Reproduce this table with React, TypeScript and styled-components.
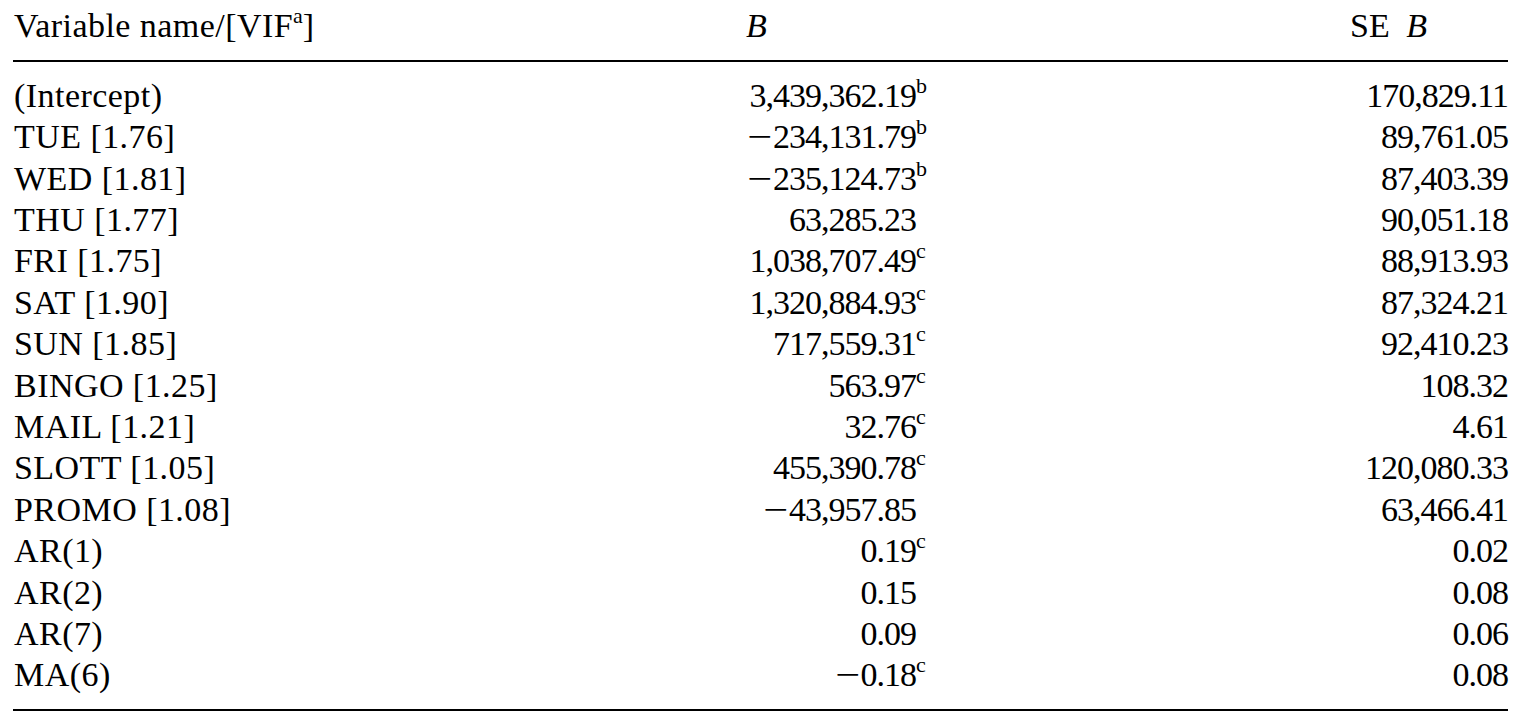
import React from 'react';
import styled, { createGlobalStyle } from 'styled-components';

const GlobalStyle = createGlobalStyle`
   html, body {
      margin: 0;
      background: #fff;
   }
   body {
      font-family: 'Liberation Serif', 'Times New Roman', serif;
      color: #000;
   }
`;

type Entry = { name: string; b: string; neg?: boolean; bNote?: string; se: string };

const ROWS: Entry[] = [
   { name: '(Intercept)', b: '3,439,362.19', bNote: 'b', se: '170,829.11' },
   { name: 'TUE [1.76]', b: '234,131.79', neg: true, bNote: 'b', se: '89,761.05' },
   { name: 'WED [1.81]', b: '235,124.73', neg: true, bNote: 'b', se: '87,403.39' },
   { name: 'THU [1.77]', b: '63,285.23', se: '90,051.18' },
   { name: 'FRI [1.75]', b: '1,038,707.49', bNote: 'c', se: '88,913.93' },
   { name: 'SAT [1.90]', b: '1,320,884.93', bNote: 'c', se: '87,324.21' },
   { name: 'SUN [1.85]', b: '717,559.31', bNote: 'c', se: '92,410.23' },
   { name: 'BINGO [1.25]', b: '563.97', bNote: 'c', se: '108.32' },
   { name: 'MAIL [1.21]', b: '32.76', bNote: 'c', se: '4.61' },
   { name: 'SLOTT [1.05]', b: '455,390.78', bNote: 'c', se: '120,080.33' },
   { name: 'PROMO [1.08]', b: '43,957.85', neg: true, se: '63,466.41' },
   { name: 'AR(1)', b: '0.19', bNote: 'c', se: '0.02' },
   { name: 'AR(2)', b: '0.15', se: '0.08' },
   { name: 'AR(7)', b: '0.09', se: '0.06' },
   { name: 'MA(6)', b: '0.18', neg: true, bNote: 'c', se: '0.08' },
];

const Table = styled.div`
   margin-left: 13px;
   width: 1495px;
   font-size: 34px;
   line-height: 41.4px;
`;

const Row = styled.div`
   display: grid;
   grid-template-columns: 733px 186px 1fr 158px;
   white-space: nowrap;
`;

const HeadRow = styled(Row)`
   padding: 5px 0 13.6px;
   border-bottom: 2px solid #000;
`;

const Body = styled.div`
   padding: 12.8px 0 13.2px;
   border-bottom: 2px solid #000;
`;

const NameCell = styled.div`
   grid-column: 1;
   padding-left: 1px;
   letter-spacing: 0.45px;
`;

const HeadCell = styled.div<{ $col: number }>`
   grid-column: ${(p) => p.$col};
`;

const NumCell = styled.div<{ $col: number }>`
   grid-column: ${(p) => p.$col};
   text-align: right;
`;

const Digits = styled.span`
   letter-spacing: -1px;
`;

// the typeset minus is longer than the font's own glyph
const Minus = styled.span`
   display: inline-block;
   width: 26px;
   text-align: right;
   transform: scaleX(1.3);
   transform-origin: right center;
   margin-right: 1px;
`;

const Note = styled.sup<{ $slot?: boolean }>`
   display: inline-block;
   font-size: 22px;
   line-height: 0;
   vertical-align: 14px;
   letter-spacing: 0;
   ${(p) => (p.$slot ? 'width: 16px; text-align: left;' : '')}
`;

const Ital = styled.i<{ $gap?: boolean }>`
   font-style: italic;
   margin-left: ${(p) => (p.$gap ? '8px' : '0')};
`;

const App: React.FC = () => (
   <>
      <GlobalStyle />
      <Table>
         <HeadRow>
            <NameCell>
               Variable name/[VIF<Note>a</Note>]
            </NameCell>
            <HeadCell $col={2}>
               <Ital>B</Ital>
            </HeadCell>
            <HeadCell $col={4}>
               SE <Ital $gap>B</Ital>
            </HeadCell>
         </HeadRow>
         <Body>
            {ROWS.map((r) => (
               <Row key={r.name}>
                  <NameCell>{r.name}</NameCell>
                  <NumCell $col={2}>
                     {r.neg && <Minus>{'\u2212'}</Minus>}
                     <Digits>{r.b}</Digits>
                     <Note $slot>{r.bNote ?? ''}</Note>
                  </NumCell>
                  <NumCell $col={4}>
                     <Digits>{r.se}</Digits>
                  </NumCell>
               </Row>
            ))}
         </Body>
      </Table>
   </>
);

export default App;
